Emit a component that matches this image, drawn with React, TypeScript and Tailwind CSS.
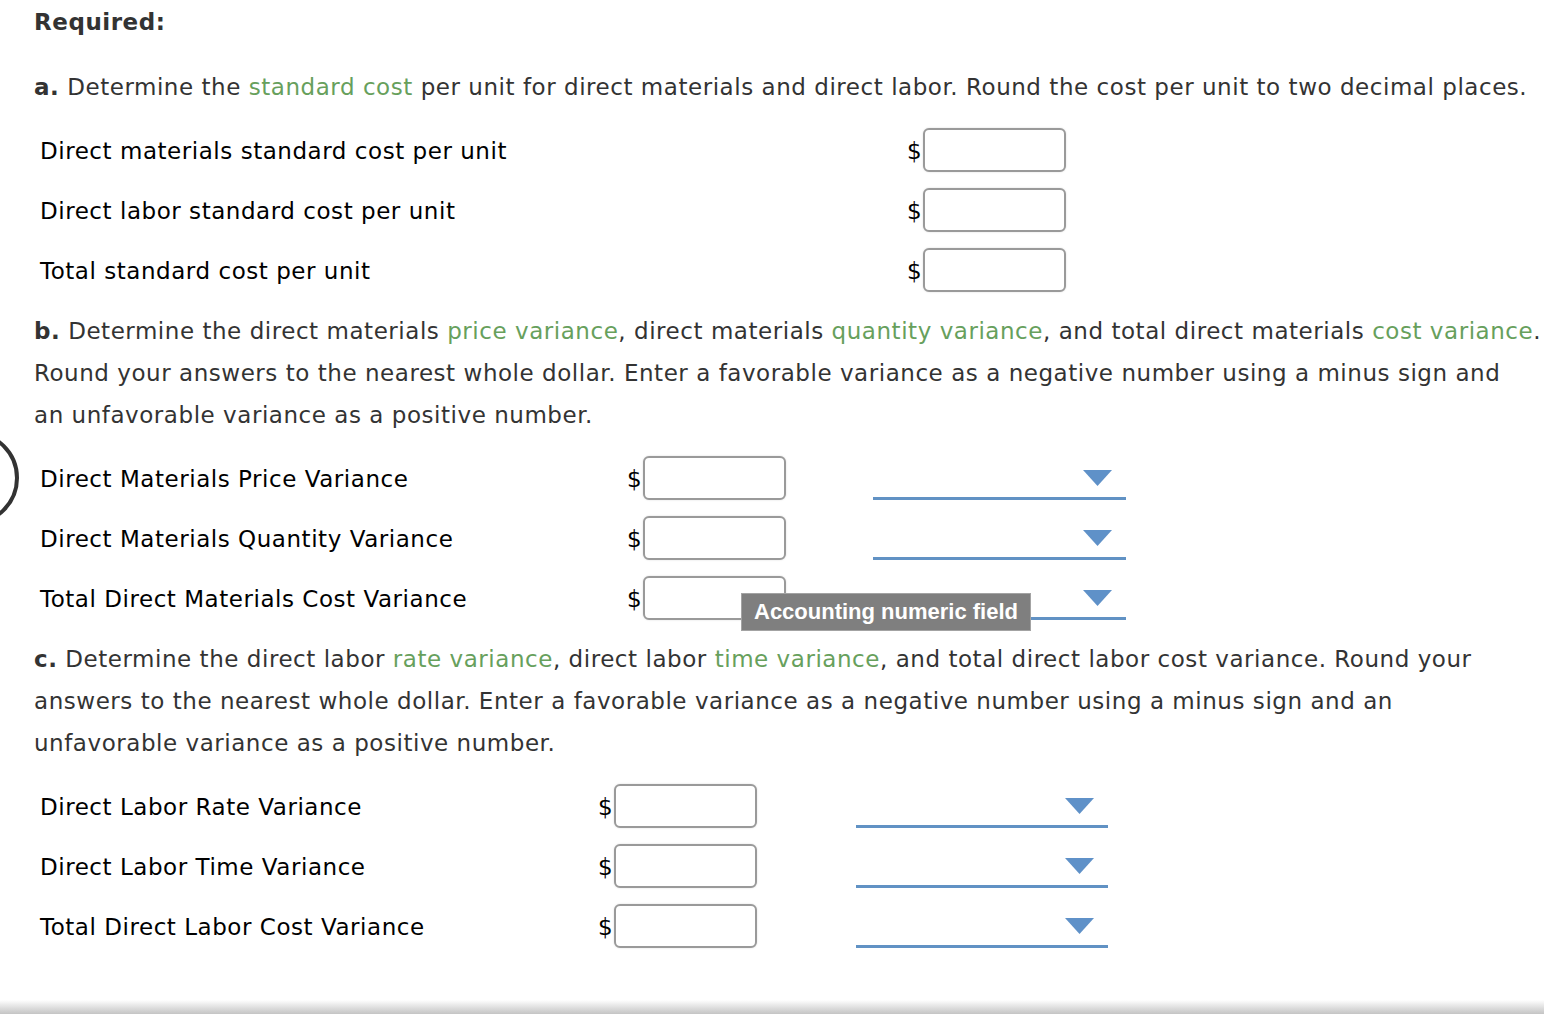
import type { ReactNode } from 'react'

const green = 'text-[#67a05c]'

function Term({ children }: { children: ReactNode }) {
  return <span className={green}>{children}</span>
}

function MoneyInput() {
  return (
    <div className="flex items-center">
      <span className="w-[16px] tracking-normal text-black">$</span>
      <div className="mb-[3px] h-[44px] w-[143px] rounded-[6px] border-2 border-[#9a9a9a] bg-white shadow-[0_0_2px_rgba(0,0,0,0.15)]" />
    </div>
  )
}

function Dropdown({ width }: { width: string }) {
  return (
    <div className={`flex h-[42px] items-center justify-end border-b-[3px] border-[#6192c4] pr-[14px] ${width}`}>
      <svg width="29" height="16" viewBox="0 0 29 16">
        <polygon points="0,0 29,0 14.5,16" fill="#5f91c8" />
      </svg>
    </div>
  )
}

function Row({ label, labelWidth, gap, dropWidth }: { label: string, labelWidth: string, gap?: string, dropWidth?: string }) {
  return (
    <div className="flex h-[60px] items-center pl-[6px]">
      <div className={`${labelWidth} text-black`}>{label}</div>
      <MoneyInput />
      {dropWidth && (
        <div className={gap}>
          <Dropdown width={dropWidth} />
        </div>
      )}
    </div>
  )
}

export default function App() {
  return (
    <div
      className="relative flex h-[1020px] w-[1544px] flex-col overflow-hidden bg-white pl-[34px] text-[23px] leading-[42px] tracking-[0.54px] text-[#333]"
      style={{ fontFamily: '"DejaVu Sans", Verdana, sans-serif' }}
    >
      <svg className="absolute left-0 top-[430px]" width="24" height="96" viewBox="0 0 24 96">
        <circle cx="-28" cy="48" r="45" fill="none" stroke="#333" strokeWidth="4" />
      </svg>

      <div className="mt-[1px] font-bold">Required:</div>

      <p className="mt-[23px]">
        <b>a.</b> Determine the <Term>standard cost</Term> per unit for direct materials and direct labor. Round the cost per unit to two decimal places.
      </p>

      <div className="mt-[13px] flex flex-col">
        <Row label="Direct materials standard cost per unit" labelWidth="w-[867px]" />
        <Row label="Direct labor standard cost per unit" labelWidth="w-[867px]" />
        <Row label="Total standard cost per unit" labelWidth="w-[867px]" />
      </div>

      <p className="mt-[9px] whitespace-nowrap">
        <b>b.</b> Determine the direct materials <Term>price variance</Term>, direct materials <Term>quantity variance</Term>, and total direct materials <Term>cost variance</Term>.
        <br />
        Round your answers to the nearest whole dollar. Enter a favorable variance as a negative number using a minus sign and
        <br />
        an unfavorable variance as a positive number.
      </p>

      <div className="mt-[13px] flex flex-col">
        <Row label="Direct Materials Price Variance" labelWidth="w-[587px]" gap="ml-[87px]" dropWidth="w-[253px]" />
        <Row label="Direct Materials Quantity Variance" labelWidth="w-[587px]" gap="ml-[87px]" dropWidth="w-[253px]" />
        <Row label="Total Direct Materials Cost Variance" labelWidth="w-[587px]" gap="ml-[87px]" dropWidth="w-[253px]" />
      </div>

      <div
        className="absolute left-[741px] top-[593px] whitespace-nowrap border border-[#a3a3a3] bg-[#7f7f7f] px-[12px] text-[22px] font-bold leading-[36px] tracking-normal text-white"
        style={{ fontFamily: '"Liberation Sans", Arial, sans-serif' }}
      >
        Accounting numeric field
      </div>

      <p className="mt-[9px]">
        <b>c.</b> Determine the direct labor <Term>rate variance</Term>, direct labor <Term>time variance</Term>, and total direct labor cost variance. Round your
        <br />
        answers to the nearest whole dollar. Enter a favorable variance as a negative number using a minus sign and an
        <br />
        unfavorable variance as a positive number.
      </p>

      <div className="mt-[13px] flex flex-col">
        <Row label="Direct Labor Rate Variance" labelWidth="w-[558px]" gap="ml-[99px]" dropWidth="w-[252px]" />
        <Row label="Direct Labor Time Variance" labelWidth="w-[558px]" gap="ml-[99px]" dropWidth="w-[252px]" />
        <Row label="Total Direct Labor Cost Variance" labelWidth="w-[558px]" gap="ml-[99px]" dropWidth="w-[252px]" />
      </div>

      <div className="absolute bottom-[6px] left-0 h-[14px] w-full bg-gradient-to-b from-white to-[#c4c4c4]" />
    </div>
  )
}
